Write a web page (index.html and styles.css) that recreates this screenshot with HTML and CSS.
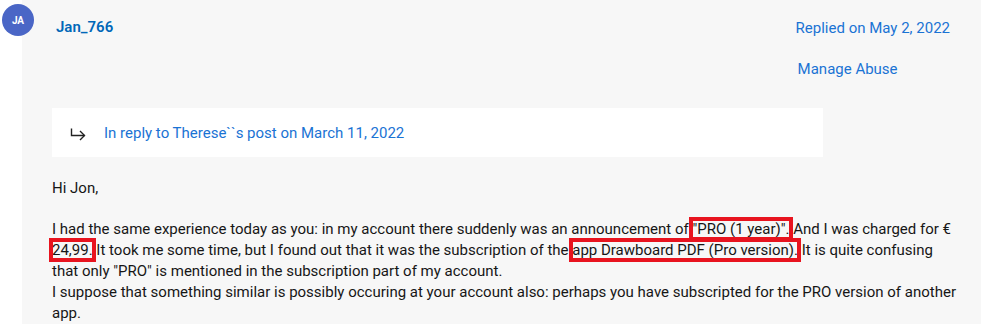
FILE: index.html
```html
<!DOCTYPE html>
<html lang="en">
<head>
<meta charset="utf-8">
<title>Reply</title>
<link rel="stylesheet" href="styles.css">
</head>
<body>
<div class="post">
  <div class="avatar">JA</div>
  <div class="main">
    <div class="head">
      <a class="author" href="#">Jan_766</a>
      <div class="meta">
        <a class="replied" href="#">Replied on May 2, 2022</a>
        <a class="abuse" href="#">Manage Abuse</a>
      </div>
    </div>
    <div class="reply-to">
      <svg class="reply-icon" width="16" height="13" viewBox="0 0 16 13" aria-hidden="true">
        <path d="M1.5 0.5 V7.5 H14.5" fill="none" stroke="#222" stroke-width="1.4"/>
        <path d="M10 3 L14.5 7.5 L10 12" fill="none" stroke="#222" stroke-width="1.4"/>
      </svg>
      <a class="reply-link" href="#">In reply to Therese``s post on March 11, 2022</a>
    </div>
    <div class="body">
      <p>Hi Jon,</p>
      <p>I had the same experience today as you: in my account there suddenly was an announcement of <span class="mark">"PRO (1 year)".</span> And I was charged for €<br><span class="mark">24,99.</span> It took me some time, but I found out that it was the subscription of the <span class="mark">app Drawboard PDF (Pro version).</span> It is quite confusing<br>that only "PRO" is mentioned in the subscription part of my account.<br>I suppose that something similar is possibly occuring at your account also: perhaps you have subscripted for the PRO version of another<br>app.</p>
    </div>
  </div>
</div>
</body>
</html>
```
FILE: styles.css
```css
html, body {
  margin: 0;
  padding: 0;
}
body {
  font-family: Roboto, "Segoe UI", sans-serif;
  font-size: 15px;
  background: #fff;
  overflow: hidden;
}
a {
  text-decoration: none;
}
.post {
  display: flex;
  align-items: flex-start;
  padding: 4px 0 0 2px;
  height: 324px;
  overflow: hidden;
  box-sizing: border-box;
  background: linear-gradient(to right, #fff 22px, #f7f7f7 22px);
}
.avatar {
  flex: 0 0 32px;
  height: 32px;
  border-radius: 50%;
  background: #4a66c6;
  color: #fff;
  font-size: 10px;
  font-weight: 700;
  display: flex;
  align-items: center;
  justify-content: center;
  margin-right: 18px;
}
.main {
  flex: 1;
  min-width: 0;
  padding-right: 31px;
}
.head {
  display: flex;
  justify-content: space-between;
  align-items: flex-start;
  padding-left: 4px;
  line-height: 20px;
}
.author {
  margin-top: 13px;
  font-weight: 600;
  color: #0067b8;
}
.meta {
  margin-top: 14px;
  display: flex;
  flex-direction: column;
  align-items: flex-start;
  gap: 21px;
}
.replied, .abuse {
  color: #1a73d4;
}
.abuse {
  padding-left: 2px;
}
.reply-to {
  margin-top: 29px;
  width: 771px;
  height: 49px;
  box-sizing: border-box;
  background: #fff;
  display: flex;
  align-items: center;
  gap: 18px;
  padding-left: 18px;
}
.reply-icon {
  flex: none;
  margin-top: 4px;
}
.reply-link {
  color: #1a73d4;
  line-height: 20px;
}
.body {
  margin-top: 21px;
  color: #161616;
  line-height: 21px;
}
.body p {
  margin: 0 0 20px;
  white-space: nowrap;
}
.body p:last-child {
  margin-bottom: 0;
}
.mark {
  outline: 4px solid #e8141f;
  outline-offset: -1px;
}
```
